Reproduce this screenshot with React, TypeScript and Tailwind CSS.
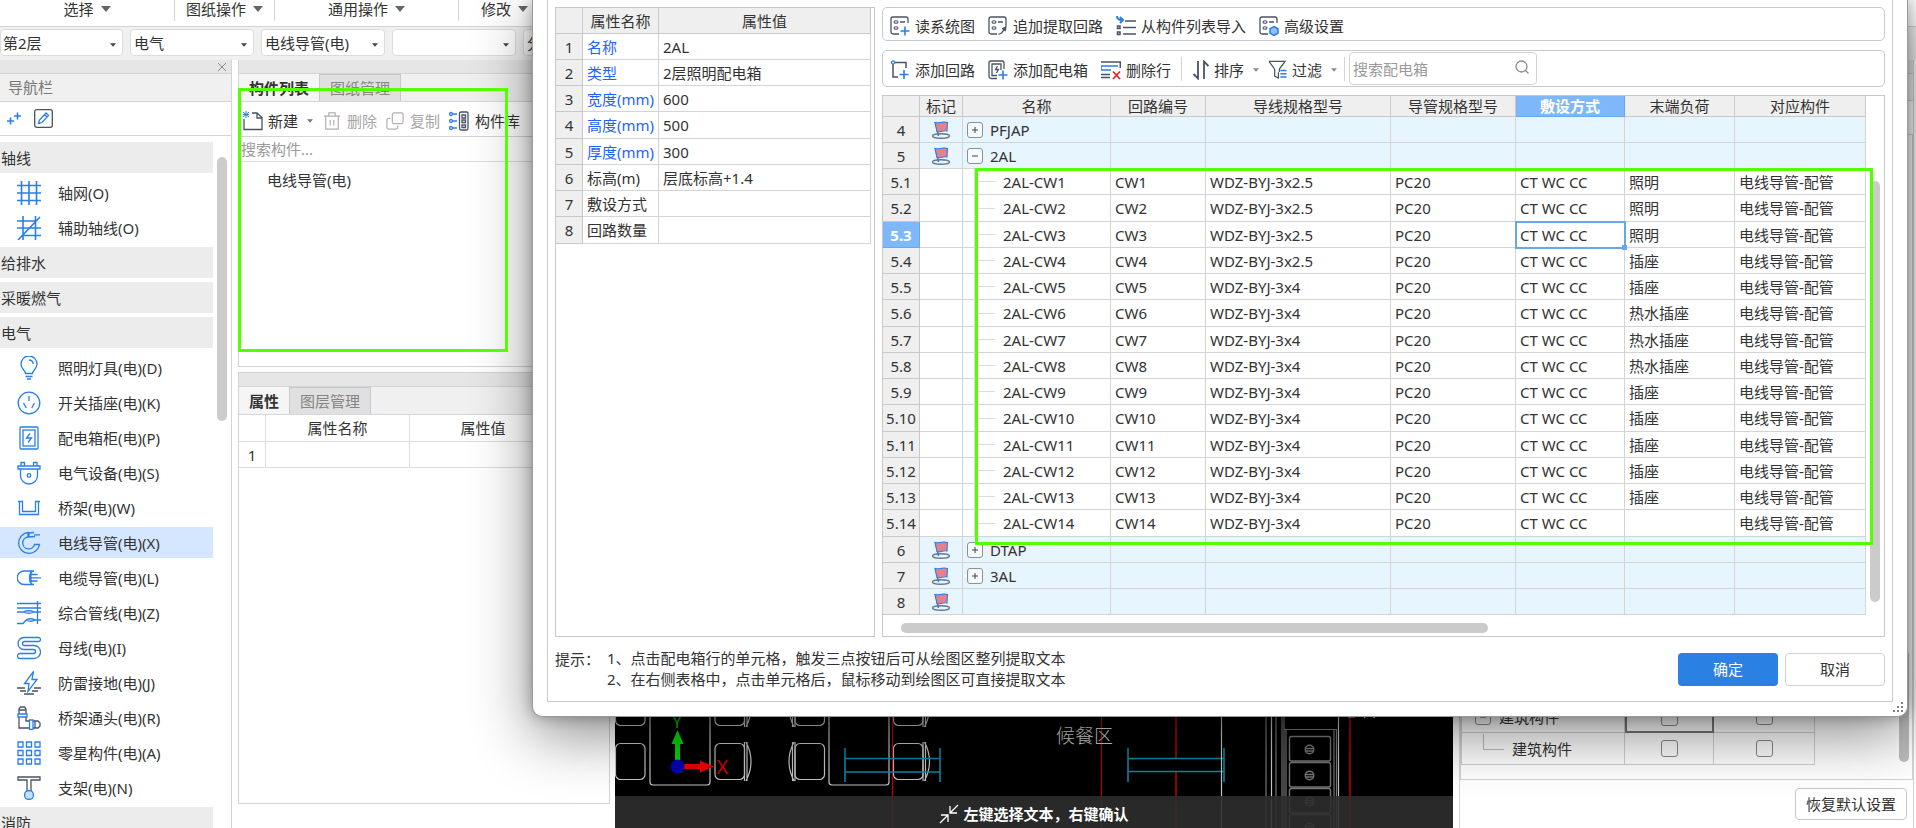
import React from 'react';

const FONT = "font-['Noto_Sans','Noto_Sans_CJK_SC',sans-serif]";
const B = '#2b7de9';
const D = '#4a5362';

type IconProps = { children: React.ReactNode; size?: string; box?: string };

function Svg({ children, size = 'size-6', box = '0 0 24 24' }: IconProps) {
  return (
    <svg
      viewBox={box}
      className={`${size} shrink-0`}
      fill="none"
      stroke={B}
      strokeWidth="1.3"
      aria-hidden="true"
    >
      {children}
    </svg>
  );
}

function Caret({ small = false, tone = '#666666' }: { small?: boolean; tone?: string }) {
  return (
    <svg viewBox="0 0 10 6" className={small ? 'h-1 w-1.5 shrink-0' : 'h-1.5 w-2.5 shrink-0'} aria-hidden="true">
      <path d="M0 0h10L5 6z" fill={tone} />
    </svg>
  );
}

const navIcons: Record<string, React.ReactNode> = {
  grid: (
    <Svg>
      <path strokeWidth="1.6" d="M4.5 0v24M12 0v24M19.500 0v24M0 4.500h24M0 12h24M0 19.500h24" />
    </Svg>
  ),
  aux: (
    <Svg>
      <path strokeWidth="1.6" d="M6 0v24M18.500 0v24M0 5h18M0 12h24M5 19.500h19M1 24L23 1" />
    </Svg>
  ),
  bulb: (
    <Svg>
      <path d="M8.500 17.500c0-3-4.500-4.500-4.500-9.500a8 8 0 0 1 16 0c0 5-4.500 6.500-4.500 9.500zM12 4c2.500 0 4 1.500 4.200 4M8.500 20.500h7M10 23h4" />
    </Svg>
  ),
  socket: (
    <Svg>
      <circle cx="12" cy="12" r="10.800" />
      <path d="M12 5v5M6.500 12l2.800 5M17.500 12l-2.800 5" />
    </Svg>
  ),
  box: (
    <Svg>
      <rect x="3" y="1" width="18" height="22" rx="1" />
      <rect x="6" y="4" width="12" height="16" />
      <path d="M13 7.500l-3.500 4.500h5L11 16.500" />
    </Svg>
  ),
  device: (
    <Svg>
      <path d="M1 5h22v3H1zM4 5V1.500h3.500V5M16.500 5V1.500H20V5M3.500 8v6.500a8.500 8.500 0 0 0 17 0V8" />
      <circle cx="12" cy="14.500" r="1.800" />
    </Svg>
  ),
  tray: (
    <Svg>
      <path d="M1 5.500h4.500v10h13v-10H23M2.500 5.500v13h19v-13" />
    </Svg>
  ),
  conduit: (
    <Svg>
      <path d="M11 1.500a10.500 10.500 0 1 0 11.500 12h-5a6 6 0 1 1-6.500-7.500zM11 2l6-.5M11 6l7-.5M12 1v5M17 3.800h6" />
    </Svg>
  ),
  cable: (
    <Svg>
      <path d="M17 5H7a6 6 0 0 0 0 13.500h10M17 5c-3 0-4.500 3-4.500 6.800s1.500 6.700 4.500 6.700M12.500 8.500h8M12.500 11.800h11.500M12.500 15h8M14 7v9.500" />
    </Svg>
  ),
  pipes: (
    <Svg>
      <path d="M0 2.500h24M0 7h24M0 11h6q6-2.500 11 0-5 2.500-11 0M17 11h7M20.500 0v23M0 22.500h6l3-3.500h0q5-2.500 9 0-4 2.500-9 0M18 19h6" />
    </Svg>
  ),
  bus: (
    <Svg>
      <path d="M21.500 1.500H7a6 6 0 0 0 0 12h9.500a2 2 0 0 1 0 4H3a2.500 2.500 0 0 0 0 5h14a6.500 6.500 0 0 0 0-13H7.500a1.500 1.500 0 0 1 0-4h14a2 2 0 0 0 0-4z" />
    </Svg>
  ),
  ground: (
    <Svg>
      <path stroke={D} d="M0 17h8M17 17h7M3 20h6M15 20h6M7 23h10" />
      <path fill="#ffffff" d="M16.500.5L7.500 12.500h4.500l-1 8 9-12h-5z" />
    </Svg>
  ),
  joint: (
    <Svg>
      <path stroke={D} d="M2 8V3l1.500-2h4L9 3v5M2 11v11h10M9 11v4h3M16 15h5l2 2v3l-2 2h-5M18 15v7M2 4h7" />
      <path d="M1 8h9v3H1zM12.500 14h3.500v9.500h-3.500z" />
    </Svg>
  ),
  misc: (
    <Svg>
      <path d="M1 1h5v5H1zM9.500 1h5v5h-5zM18 1h5v5h-5zM1 9.500h5v5H1zM9.500 9.500h5v5h-5zM18 9.500h5v5h-5zM1 18h5v5H1zM9.500 18h5v5h-5zM18 18h5v5h-5z" />
    </Svg>
  ),
  support: (
    <Svg>
      <path stroke={D} d="M1 1h22v3H14v11h-4V4H1z" />
      <circle cx="12" cy="19" r="4.500" fill="#c5dfff" />
    </Svg>
  ),
};

const nav: { label: string; icon?: string; active?: boolean }[] = [
  { label: '轴线' },
  { label: '轴网(O)', icon: 'grid' },
  { label: '辅助轴线(O)', icon: 'aux' },
  { label: '给排水' },
  { label: '采暖燃气' },
  { label: '电气' },
  { label: '照明灯具(电)(D)', icon: 'bulb' },
  { label: '开关插座(电)(K)', icon: 'socket' },
  { label: '配电箱柜(电)(P)', icon: 'box' },
  { label: '电气设备(电)(S)', icon: 'device' },
  { label: '桥架(电)(W)', icon: 'tray' },
  { label: '电线导管(电)(X)', icon: 'conduit', active: true },
  { label: '电缆导管(电)(L)', icon: 'cable' },
  { label: '综合管线(电)(Z)', icon: 'pipes' },
  { label: '母线(电)(I)', icon: 'bus' },
  { label: '防雷接地(电)(J)', icon: 'ground' },
  { label: '桥架通头(电)(R)', icon: 'joint' },
  { label: '零星构件(电)(A)', icon: 'misc' },
  { label: '支架(电)(N)', icon: 'support' },
  { label: '消防' },
];

function Ribbon() {
  const groups = [
    { label: '选择', w: 'w-[175px]' },
    { label: '图纸操作', w: 'w-[100px]' },
    { label: '通用操作', w: 'w-[184px]' },
    { label: '修改', w: 'w-[92px]' },
  ];
  return (
    <div className="flex h-[27px] shrink-0 border-b border-[#d4d4d4] bg-white">
      {groups.map((g) => (
        <div key={g.label} className={`${g.w} h-[21px] shrink-0 border-r border-[#d4d4d4]`}>
          <button className="flex h-[18px] w-full items-center justify-center gap-[7px] leading-[18px]">
            {g.label}
            <Caret />
          </button>
        </div>
      ))}
    </div>
  );
}

function Picker({ value, label, first = false }: { value: string; label: string; first?: boolean }) {
  return (
    <div className={`relative shrink-0 ${first ? 'w-[123px]' : 'w-[124px]'}`}>
      <select
        aria-label={label}
        className={`h-[27px] w-full appearance-none rounded border border-[#dcdcdc] bg-white leading-5 outline-none ${first ? 'pl-0.5' : 'pl-[3px]'}`}
      >
        <option>{value}</option>
      </select>
      <span className="pointer-events-none absolute inset-y-0 right-[7px] flex items-center">
        <Caret small tone="#444444" />
      </span>
    </div>
  );
}

function NavPanel() {
  return (
    <aside className="flex w-[232px] shrink-0 flex-col border-r border-[#d4d4d4] bg-white">
      <div className="flex h-[14px] shrink-0 items-center justify-end border-b border-[#d4d4d4] bg-[#e6e6e6] pr-1">
        <button aria-label="关闭导航栏">
          <svg viewBox="0 0 10 10" className="size-2.5" stroke="#8a8a8a" aria-hidden="true">
            <path d="M1 1l8 8M9 1L1 9" />
          </svg>
        </button>
      </div>
      <div className="h-[27px] shrink-0 bg-[#f0f0f0] pl-2 leading-[27px] text-[#777777]">导航栏</div>
      <div className="flex h-[35px] shrink-0 items-center gap-[13px] border-y border-[#d4d4d4] pl-[7px]">
        <button aria-label="展开">
          <Svg size="size-3.5" box="0 0 14 14">
            <path strokeWidth="1.6" d="M0 9h7M3.500 5.500v7M7 4h7M10.500.5v7" />
          </Svg>
        </button>
        <button aria-label="编辑">
          <Svg size="size-[19px]" box="0 0 19 19">
            <rect x=".7" y=".7" width="17.600" height="17.600" rx="2" stroke={D} />
            <path d="M4.500 14.500l1-3.500 6.500-7 2.500 2.500-6.500 7zM10.500 5.500l2.500 2.500" />
          </Svg>
        </button>
      </div>
      <div className="flex min-h-0 flex-1 justify-between overflow-hidden">
        <ul className="w-[213px] pt-1.5">
          {nav.map((n) => (
            <li key={n.label} className="pb-1">
              <button
                className={`flex h-[31px] w-full items-center text-left ${
                  n.icon ? (n.active ? 'gap-[17px] bg-[#d4e7ff] pl-[17px]' : 'gap-[17px] pl-[17px]') : 'bg-[#ececec] pl-px'
                }`}
              >
                {n.icon && navIcons[n.icon]}
                {n.label}
              </button>
            </li>
          ))}
        </ul>
        <div className="mt-[21px] mr-1 h-[264px] w-2.5 rounded-full bg-[#cbcbcb]" />
      </div>
    </aside>
  );
}

function Tabs({ active, other }: { active: string; other: string }) {
  return (
    <div className="flex h-[28px] shrink-0 border-b border-[#d4d8de] bg-[#f0f0f0]">
      <button className="border-r border-[#c4cad2] bg-[#f5f5f5] px-[10px] font-bold">{active}</button>
      <button className="border-t border-r border-[#c4cad2] bg-[#e0e0e0] px-[10px] text-[#858585]">{other}</button>
    </div>
  );
}

function ComponentPanel() {
  return (
    <div className="ml-1.5 flex w-[372px] shrink-0 flex-col pb-[24px]">
      <section className="flex h-[307px] shrink-0 flex-col border border-t-0 border-[#d4d4d4]">
        <div className="h-[14px] shrink-0 border-b border-[#d4d4d4] bg-[#e6e6e6]" />
        <Tabs active="构件列表" other="图纸管理" />
        <div className="flex h-[35px] shrink-0 items-center border-b border-[#d4d4d4] pt-1 pl-1">
          <button className="flex items-center gap-[5px]">
            <Svg size="size-5" box="0 0 20 20">
              <path stroke={D} d="M1 8v10.500h18V6.500L14 2H9M14 2v5h5" />
              <path strokeWidth="1" d="M0 1l6 5M6 1L0 6M3 0v7M0 3.500h6" />
            </Svg>
            新建
          </button>
          <button aria-label="新建选项" className="ml-[9px]">
            <Caret small tone="#777777" />
          </button>
          <button disabled className="ml-2.5 flex items-center gap-1.5 text-[#a6a6a6]">
            <Svg size="size-[18px]" box="0 0 18 20">
              <path stroke="#b0b0b0" d="M0 4.500h18M5.500 4.500V1h7v3.500M2 4.500V19h14V4.500M7 9v6M11 9v6" />
            </Svg>
            删除
          </button>
          <button disabled className="ml-[9px] flex items-center gap-1.5 text-[#a6a6a6]">
            <Svg size="size-[18px]" box="0 0 20 20">
              <rect x="7" y="1" width="12" height="12" rx="2" stroke="#b0b0b0" />
              <path stroke="#b0b0b0" d="M5 7H3a2 2 0 0 0-2 2v8a2 2 0 0 0 2 2h8a2 2 0 0 0 2-2v-2" />
            </Svg>
            复制
          </button>
          <button className="ml-[9px] flex items-center gap-1.5">
            <Svg size="size-5" box="0 0 20 20">
              <path d="M4 3h4M4 10h4M4 17h4" />
              <circle cx="2" cy="3" r="1.500" />
              <circle cx="2" cy="10" r="1.500" />
              <circle cx="2" cy="17" r="1.500" />
              <rect x="10.500" y="1" width="8.500" height="18" rx="1.500" stroke={D} />
              <path stroke={D} d="M13 4h3.500v3H13zM13 9h3.500v2.500H13zM13 14h3.500v2.500H13z" />
            </Svg>
            构件库
          </button>
        </div>
        <input
          aria-label="搜索构件"
          placeholder="搜索构件..."
          className="h-[25px] shrink-0 border-b border-[#dcdcdc] pl-0.5 outline-none placeholder:text-[#9a9a9a]"
        />
        <ul className="pt-1.5 pl-[28px]">
          <li className="leading-6">电线导管(电)</li>
        </ul>
      </section>
      <section className="mt-[5px] flex min-h-0 flex-1 flex-col border border-[#d4d4d4]">
        <div className="h-[14px] shrink-0 border-b border-[#d4d4d4] bg-[#e6e6e6]" />
        <Tabs active="属性" other="图层管理" />
        <table className="w-full table-fixed border-separate border-spacing-0">
          <colgroup>
            <col className="w-[27px]" />
            <col className="w-[144px]" />
            <col />
          </colgroup>
          <thead>
            <tr className="h-[27px]">
              <th className="border-r border-b border-[#dcdcdc]" />
              <th className="border-r border-b border-[#dcdcdc] font-normal">属性名称</th>
              <th className="border-b border-[#dcdcdc] pr-[53px] font-normal">属性值</th>
            </tr>
          </thead>
          <tbody>
            <tr className="h-[26px]">
              <td className="border-r border-b border-[#dcdcdc] text-center">1</td>
              <td className="border-r border-b border-[#dcdcdc]" />
              <td className="border-b border-[#dcdcdc]" />
            </tr>
          </tbody>
        </table>
      </section>
    </div>
  );
}

function Chair({ x, y, back }: { x: number; y: number; back?: 'left' | 'right' }) {
  return (
    <g transform={`translate(${x} ${y})`}>
      <rect width="29.500" height="36" rx="5" />
      {back === 'right' && <path d="M29.500-1.500v39M32-1.500v39M31-1.500q10 19.500 0 39" />}
      {back === 'left' && <path d="M0-1.500v39M-2.500-1.500v39M-1-1.500q-10 19.500 0 39" />}
    </g>
  );
}

function Drawing() {
  return (
    <svg viewBox="0 0 838 112" className="h-[112px] w-[838px] shrink-0" fill="none" stroke="#c4c4c4" strokeWidth="1.2" aria-hidden="true">
      {[-26.5, 27.5].map((y) => (
        <g key={y}>
          <Chair x={0.5} y={y} />
          <Chair x={100} y={y} back="right" />
          <Chair x={180} y={y} back="left" />
          <Chair x={278.5} y={y} back="right" />
        </g>
      ))}
      <rect x="35" y="-10" width="60" height="79" rx="3" />
      <rect x="214" y="-10" width="60" height="79" rx="3" />
      <path stroke="#c00000" d="M277.500 0v112M486.500 0v112" />
      <path stroke="#960000" strokeWidth="2" d="M561 0v42M561 56v56M735 1v111" />
      <path stroke="#0b88a8" strokeWidth="1.600" d="M230 32v34M325 32v34M230 42.500h95M230 56h95M513 32v34M609 32v34M513 42.500h96M513 55.500h96" />
      <path d="M606.500 0v112M656.500 0v112M723.500 0v112" />
      <path stroke="#777777" d="M651 0v112M661 0v112M667 0v112M669 0v112M669 13.500h53M671 13.500V112M719 13.500V112M721.500 13.500V112" />
      <g stroke="#777777" strokeWidth="1.400">
        {[20.5, 46.5, 72.5, 98.5].map((y) => (
          <g key={y}>
            <rect x="674.500" y={y} width="41" height="24.500" rx="2" />
            <circle cx="694.500" cy={y + 13} r="4.300" />
            <path d={`M690 ${y + 12}h9M690 ${y + 14.500}h9`} />
          </g>
        ))}
      </g>
      <path d="M733 1h7M751 0l-2 2M757 0l3 2" />
      <text x="441" y="27" fontSize="19" fill="#d0d0d0" stroke="none" fontWeight="300">
        候餐区
      </text>
      <path stroke="#00d800" strokeWidth="5" d="M62.500 46V25" />
      <path fill="#00d800" stroke="none" d="M56.500 28h12l-6-14z" />
      <path stroke="#e80000" strokeWidth="5" d="M67 50.500h20" />
      <path fill="#e80000" stroke="none" d="M85 44.500v12l14-6z" />
      <circle cx="62.500" cy="50.500" r="7" fill="#0000b0" stroke="none" />
      <text x="57" y="12" fontSize="18" fill="#00b800" stroke="none">
        Y
      </text>
      <text x="101.500" y="58" fontSize="20" fill="#d00000" stroke="none">
        X
      </text>
    </svg>
  );
}

function Canvas() {
  return (
    <main className="relative ml-[5px] flex min-w-0 flex-1 items-end overflow-hidden bg-black">
      <Drawing />
      <div className="absolute inset-x-0 bottom-0 flex h-8 items-center justify-center gap-1 bg-[#2d2d2d]/90 pt-1 font-bold text-white">
        <svg viewBox="0 0 20 20" className="size-5" fill="none" stroke="#ffffff" strokeWidth="1.300" aria-hidden="true">
          <path d="M1 19l8-8M2 11h7v7M19 1l-8 8M11 2v7h7" />
        </svg>
        左键选择文本，右键确认
      </div>
    </main>
  );
}

function Toggle({ open }: { open: boolean }) {
  return (
    <button
      aria-label={open ? '折叠' : '展开'}
      className="flex size-4 shrink-0 items-center justify-center rounded-[3px] border border-[#8f8f8f] bg-white/60"
    >
      <svg viewBox="0 0 8 8" className="size-2" stroke="#444444" aria-hidden="true">
        <path d={open ? 'M1 4h6' : 'M1 4h6M4 1v6'} />
      </svg>
    </button>
  );
}

function DisplayPanel() {
  const box = 'block size-[17px] mx-auto appearance-none rounded-[3px] border border-[#8a8a8a] bg-white/60';
  return (
    <aside className="mr-0.5 ml-1.5 flex w-[455px] shrink-0 flex-col border-x border-[#d4d4d4] bg-white">
      <div className="h-[14px] shrink-0 border-b border-[#d4d4d4] bg-[#e6e6e6]" />
      <div className="h-[27px] shrink-0 border-b border-[#d4d4d4] bg-[#f0f0f0]" />
      <div className="mt-[33px] flex min-h-0 flex-1 items-end justify-between border border-[#d4d4d4] pb-[14px]">
        <table className="w-[354px] table-fixed border-separate border-spacing-0 border-l border-[#d0d0d0]">
          <colgroup>
            <col className="w-[163px]" />
            <col className="w-[89px]" />
            <col />
          </colgroup>
          <tbody>
            <tr className="h-8">
              <td className="border-r border-b border-[#d0d0d0] p-0 pl-[13px]">
                <div className="flex items-center gap-2">
                  <Toggle open />
                  建筑构件
                </div>
              </td>
              <td className="border-2 border-[#777777] p-0">
                <input type="checkbox" aria-label="建筑构件 显示" className={box} />
              </td>
              <td className="border-r border-b border-[#d0d0d0] p-0">
                <input type="checkbox" aria-label="建筑构件 名称" className={box} />
              </td>
            </tr>
            <tr className="h-8">
              <td className="border-r border-b border-[#d0d0d0] p-0 pl-[21px]">
                <div className="flex items-center gap-2">
                  <span className="mb-3.5 h-4 w-[21px] border-b border-l border-[#bdbdbd]" />
                  建筑构件
                </div>
              </td>
              <td className="border-r border-b border-[#d0d0d0] p-0">
                <input type="checkbox" aria-label="子项 显示" className={box} />
              </td>
              <td className="border-r border-b border-[#d0d0d0] p-0">
                <input type="checkbox" aria-label="子项 名称" className={box} />
              </td>
            </tr>
          </tbody>
        </table>
        <div className="mr-[3px] mb-[3px] h-[112px] w-2.5 rounded-full bg-[#bdbdbd]" />
      </div>
      <div className="flex h-12 shrink-0 items-center justify-end pr-1.5">
        <button className="h-8 rounded border border-[#c8c8c8] bg-white px-2.5">恢复默认设置</button>
      </div>
    </aside>
  );
}

const props: [string, string, boolean][] = [
  ['名称', '2AL', true],
  ['类型', '2层照明配电箱', true],
  ['宽度(mm)', '600', true],
  ['高度(mm)', '500', true],
  ['厚度(mm)', '300', true],
  ['标高(m)', '层底标高+1.4', false],
  ['敷设方式', '', false],
  ['回路数量', '', false],
];

function PropertyTable() {
  const cell = 'border-r border-b border-[#d4d4d4] p-0';
  const head = 'border-r border-b border-[#c8c8c8] bg-[#efefef] p-0 font-normal';
  return (
    <div className="w-[320px] shrink-0 border border-[#c8c8c8]">
      <table className="w-[315px] table-fixed border-separate border-spacing-0">
        <colgroup>
          <col className="w-[27px]" />
          <col className="w-[76px]" />
          <col />
        </colgroup>
        <thead>
          <tr className="h-[26px]">
            <th className={head} />
            <th className={head}>属性名称</th>
            <th className={head}>属性值</th>
          </tr>
        </thead>
        <tbody className="[&>tr:nth-child(4n)]:h-[27px]">
          {props.map(([k, v, blue], i) => (
            <tr key={k} className="h-[26px]">
              <th className={head}>{i + 1}</th>
              <td className={`${cell} pl-1 whitespace-nowrap ${blue ? 'text-[#1f62ff]' : ''}`}>{k}</td>
              <td className={`${cell} pl-1`}>{v}</td>
            </tr>
          ))}
        </tbody>
      </table>
    </div>
  );
}

const sheet = (
  <path stroke={D} d="M9 18H3a2 2 0 0 1-2-2V3a2 2 0 0 1 2-2h13a2 2 0 0 1 2 2v4M10 6h5" />
);
const dots = (
  <g stroke={D} strokeWidth="1.100">
    <ellipse cx="6" cy="6" rx="2" ry="1.300" />
    <ellipse cx="6" cy="12" rx="2" ry="1.300" />
  </g>
);

const toolbarIcons = {
  read: (
    <Svg size="size-5" box="0 0 20 20">
      {sheet}
      {dots}
      <path strokeWidth="1.600" d="M10.500 15h9M15 10.500v9" />
    </Svg>
  ),
  append: (
    <Svg size="size-5" box="0 0 20 20">
      {sheet}
      {dots}
      <path stroke={D} d="M18 7v4M10.500 18.500l3-1.500 4-5" />
      <path fill={D} stroke={D} strokeWidth="1" d="M14 12.500l4-1.500-.5 4z" />
    </Svg>
  ),
  importList: (
    <Svg size="size-5" box="0 0 20 20">
      <path strokeWidth="2" d="M1 0c0 3 2 4 5 4M4 1l3 3-3 3" />
      <path stroke={D} strokeWidth="1.500" d="M9 5h11M7 11.500h13M7 18h13M1.500 10h2.500v2.500H1.500zM1.500 16h2.500v2.500H1.500z" />
    </Svg>
  ),
  advanced: (
    <Svg size="size-5" box="0 0 20 20">
      {sheet}
      {dots}
      <path fill="#8fc0ff" strokeWidth="1.500" d="M15 10.500l4 2.300v4.400l-4 2.300-4-2.300v-4.400z" />
    </Svg>
  ),
  addLoop: (
    <Svg size="size-5" box="0 0 20 20">
      <path stroke={D} strokeWidth="1.500" d="M3 4v13h5M5 2.500h11v5.500" />
      <circle cx="3" cy="2.500" r="1.600" />
      <path strokeWidth="1.600" d="M9.500 14.500h9M14 10v9" />
    </Svg>
  ),
  addBox: (
    <Svg size="size-5" box="0 0 20 20">
      <path stroke={D} d="M9 18.500H3a2 2 0 0 1-2-2V3a2 2 0 0 1 2-2h11a2 2 0 0 1 2 2v6M9 15.500H4V4h9v6M9.500 6l-2 3.500h3l-2 3.500" />
      <path strokeWidth="1.600" d="M10.500 15h9M15 10.500v9" />
    </Svg>
  ),
  removeRow: (
    <Svg size="size-5" box="0 0 20 20">
      <path stroke={D} strokeWidth="1.500" d="M0 2h20M19.300 2v6M0 14.500h9M0 17.500h9" />
      <path strokeWidth="1.600" d="M0 6h17M0 10h10M0 6v4" />
      <path stroke="#e02828" strokeWidth="1.800" d="M12 11.500l7 7.500M19 11.500L12 19" />
    </Svg>
  ),
  sort: (
    <Svg size="h-5 w-[17px]" box="1 0 17 20">
      <path stroke={D} strokeWidth="1.800" d="M7 1v17.500L2.500 14M13 19V1.500L17.500 6" />
    </Svg>
  ),
  filter: (
    <Svg size="size-[19px]" box="0 0 20 20">
      <path stroke={D} d="M1 1.500h17l-6 8v3M7 9.500L1 1.500M7 9.500V17l4 2v-6" />
      <path strokeWidth="1.600" d="M13 11h6.500M13 14.500h6.500M13 18h6.500" />
    </Svg>
  ),
};

function Tool({ icon, label }: { icon: keyof typeof toolbarIcons; label: string }) {
  return (
    <button className="flex shrink-0 items-center gap-[5px] whitespace-nowrap">
      {toolbarIcons[icon]}
      {label}
    </button>
  );
}

function Toolbars() {
  return (
    <>
      <div className="flex h-[34px] shrink-0 items-center gap-[13px] rounded-[5px] border border-[#c5cbd3] pt-1 pl-[7px]">
        <Tool icon="read" label="读系统图" />
        <Tool icon="append" label="追加提取回路" />
        <Tool icon="importList" label="从构件列表导入" />
        <Tool icon="advanced" label="高级设置" />
      </div>
      <div className="mt-[9px] flex h-[37px] shrink-0 items-center rounded-[5px] border border-[#c5cbd3] pl-[7px]">
        <div className="flex items-center gap-[13px] pt-0.5">
          <Tool icon="addLoop" label="添加回路" />
          <Tool icon="addBox" label="添加配电箱" />
          <Tool icon="removeRow" label="删除行" />
        </div>
        <div className="mx-2.5 h-6 w-px bg-[#d4d4d4]" />
        <div className="flex items-center gap-[9px] pt-0.5">
          <Tool icon="sort" label="排序" />
          <Caret small tone="#888888" />
          <Tool icon="filter" label="过滤" />
          <Caret small tone="#888888" />
        </div>
        <div className="mr-1 ml-[7px] h-6 w-px bg-[#d4d4d4]" />
        <div className="flex h-[33px] w-[188px] items-center rounded border border-[#d4d4d4] pr-[7px] pl-[3px]">
          <input
            aria-label="搜索配电箱"
            placeholder="搜索配电箱"
            className="min-w-0 flex-1 outline-none placeholder:text-[#9a9a9a]"
          />
          <svg viewBox="0 0 14 14" className="mb-1 size-3.5" fill="none" stroke="#8a8a8a" strokeWidth="1.300" aria-hidden="true">
            <circle cx="6.500" cy="6.500" r="5.500" />
            <path d="M10.500 10.500l3 3" />
          </svg>
        </div>
      </div>
    </>
  );
}

function Flag() {
  return (
    <svg viewBox="0 0 20 20" className="mx-auto size-5" fill="none" aria-hidden="true">
      <ellipse cx="10" cy="16" rx="8.500" ry="2.300" stroke="#6a7686" strokeWidth="1.400" />
      <path d="M4.500 2l3 14" stroke={B} strokeWidth="1.500" />
      <path d="M4 2.500c4 1.500 7-2 12.500 0l-.5 8.500c-4-1.500-6 2-10 .5z" fill="#e8808a" stroke={B} strokeWidth="1.100" />
    </svg>
  );
}

type Row =
  | { id: string; group: true; name: string; open?: boolean }
  | { id: string; group: false; no: string; wire: string; load: string };

const loads = ['照明', '照明', '照明', '插座', '插座', '热水插座', '热水插座', '热水插座', '插座', '插座', '插座', '插座', '插座', ''];

const rows: Row[] = [
  { id: '4', group: true, name: 'PFJAP' },
  { id: '5', group: true, name: '2AL', open: true },
  ...loads.map((load, i) => ({
    id: `5.${i + 1}`,
    group: false as const,
    no: `CW${i + 1}`,
    wire: i < 4 ? 'WDZ-BYJ-3x2.5' : 'WDZ-BYJ-3x4',
    load,
  })),
  { id: '6', group: true, name: 'DTAP' },
  { id: '7', group: true, name: '3AL' },
  { id: '8', group: true, name: '' },
];

const columns = ['名称', '回路编号', '导线规格型号', '导管规格型号', '敷设方式', '末端负荷', '对应构件'];

function CircuitTable() {
  const head = 'border-r border-b border-[#c8c8c8] bg-[#efefef] p-0 font-normal';
  const picked = 'border-r border-b border-[#6aa7ea] bg-[#7fb8fa] p-0 font-bold text-white';
  const cell = 'border-r border-b border-[#d4d4d4] p-0 pl-1 whitespace-nowrap';
  return (
    <div className="mt-2 flex h-[542px] shrink-0 flex-col border border-[#c8c8c8]">
      <div className="flex min-h-0 flex-1 items-start">
        <table className="min-w-0 flex-1 table-fixed border-separate border-spacing-0">
          <colgroup>
            <col className="w-[37px]" />
            <col className="w-[43px]" />
            <col className="w-[148px]" />
            <col className="w-[95px]" />
            <col className="w-[185px]" />
            <col className="w-[125px]" />
            <col className="w-[109px]" />
            <col className="w-[110px]" />
            <col />
          </colgroup>
          <thead>
            <tr className="h-[21px] leading-5">
              <th className={head} />
              <th className={head}>标记</th>
              {columns.map((c) => (
                <th key={c} className={c === '敷设方式' ? picked : head}>
                  {c}
                </th>
              ))}
            </tr>
          </thead>
          <tbody className="[&>tr:nth-child(4n)]:h-[27px]">
            {rows.map((r) =>
              r.group ? (
                <tr key={r.id} className="h-[26px] bg-[#e7f5fe]">
                  <th className={head}>{r.id}</th>
                  <td className="border-r border-b border-[#d4d4d4] p-0">
                    <Flag />
                  </td>
                  <td className={cell}>
                    {r.name && (
                      <div className="flex items-center gap-[7px]">
                        <Toggle open={!!r.open} />
                        {r.name}
                      </div>
                    )}
                  </td>
                  {[0, 1, 2, 3, 4, 5].map((k) => (
                    <td key={k} className={cell} />
                  ))}
                </tr>
              ) : (
                <tr key={r.id} className="h-[26px]">
                  <th className={r.id === '5.3' ? picked : head}>{r.id}</th>
                  <td className={cell} />
                  <td className="border-r border-b border-[#d4d4d4] p-0 pl-[11px] whitespace-nowrap">
                    <div className="flex items-center gap-2">
                      <span className="-my-1 flex h-[26px] w-[21px] items-center border-l border-[#dcdcdc]">
                        <span className="h-px w-full bg-[#dcdcdc]" />
                      </span>
                      2AL-{r.no}
                    </div>
                  </td>
                  <td className={cell}>{r.no}</td>
                  <td className={cell}>{r.wire}</td>
                  <td className={cell}>PC20</td>
                  {r.id === '5.3' ? (
                    <td className={`${cell} relative outline-2 -outline-offset-1 outline-[#6aa7ea]`}>
                      CT WC CC
                      <span className="absolute -right-[3px] -bottom-[3px] size-[5px] bg-[#6aa7ea]" />
                    </td>
                  ) : (
                    <td className={cell}>CT WC CC</td>
                  )}
                  <td className={cell}>{r.load}</td>
                  <td className={cell}>电线导管-配管</td>
                </tr>
              ),
            )}
          </tbody>
        </table>
        <div className="mt-[85px] mr-1 ml-1 h-[421px] w-2.5 shrink-0 rounded-full bg-[#cbcbcb]" />
      </div>
      <div className="mr-5 mb-[3px] ml-[18px] h-2.5 shrink-0">
        <div className="h-full w-[61%] rounded-full bg-[#cbcbcb]" />
      </div>
    </div>
  );
}

function Dialog() {
  return (
    <div
      role="dialog"
      aria-label="配电箱"
      className="absolute top-0 right-2 left-[532px] rounded-b-[10px] border border-t-0 border-[#999999] bg-white px-[14px] pb-[14px] shadow-[0_0_14px_rgba(0,0,0,0.3),0_18px_60px_rgba(0,0,0,0.45)]"
    >
      <div className="border border-t-0 border-[#c5cbd3] px-[7px] pt-[7px]">
        <div className="flex gap-[7px]">
          <PropertyTable />
          <div className="flex min-w-0 flex-1 flex-col">
            <Toolbars />
            <CircuitTable />
          </div>
        </div>
        <div className="flex h-16 items-center">
          <p className="self-start pt-3 leading-[21px]">提示：</p>
          <ol className="pl-[7px] leading-[21px]">
            <li>1、点击配电箱行的单元格，触发三点按钮后可从绘图区整列提取文本</li>
            <li>2、在右侧表格中，点击单元格后，鼠标移动到绘图区可直接提取文本</li>
          </ol>
          <button className="ml-auto h-[33px] w-[100px] rounded bg-[#2b80e4] text-white">确定</button>
          <button className="ml-[7px] h-[33px] w-[100px] rounded border border-[#d0d0d0] bg-white">取消</button>
        </div>
      </div>
      <svg viewBox="0 0 10 10" className="absolute right-1 bottom-1 size-2.5" fill="#777f8a" aria-hidden="true">
        <path d="M8 0h2v2H8zM4 4h2v2H4zM8 4h2v2H8zM0 8h2v2H0zM4 8h2v2H4zM8 8h2v2H8z" />
      </svg>
    </div>
  );
}

export default function App() {
  return (
    <div className={`${FONT} relative flex h-screen flex-col overflow-hidden bg-white text-[15px] leading-5 text-[#333333]`}>
      <Ribbon />
      <div className="flex h-[33px] shrink-0 gap-[7px] bg-[#f0f0f0] pt-0.5">
        <Picker first label="楼层" value="第2层" />
        <Picker label="专业" value="电气" />
        <Picker label="构件类型" value="电线导管(电)" />
        <Picker label="构件" value="" />
        <Picker label="分层" value="分层1" />
      </div>
      <div className="flex min-h-0 flex-1">
        <NavPanel />
        <ComponentPanel />
        <Canvas />
        <DisplayPanel />
      </div>
      <Dialog />
      <div className="pointer-events-none absolute top-[88px] left-[238px] h-[264px] w-[270px] border-3 border-[#55ff00]" />
      <div className="pointer-events-none absolute top-[168px] right-[43px] left-[975px] h-[377px] border-3 border-[#55ff00]" />
    </div>
  );
}
